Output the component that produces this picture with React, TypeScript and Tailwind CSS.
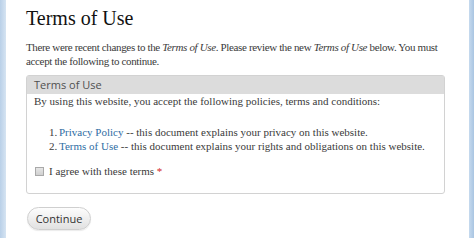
import React from "react";

export default function App() {
  const serif = { fontFamily: '"Liberation Serif", "DejaVu Serif", serif' };
  const sans = { fontFamily: '"Open Sans", "Noto Sans", sans-serif' };
  return (
    <div className="flex h-[238px] w-[474px] overflow-hidden bg-white">
      <div className="w-[6px] shrink-0 bg-gradient-to-r from-[#b9d0e8] to-[#d6e4f2]" />
      <div className="flex-1 pl-[20px] pr-[10px] text-[#3a3a3a]" style={serif}>
        <h1 className="pt-[5px] text-[20px] leading-[26px] text-[#111]">Terms of Use</h1>
        <p className="mt-[9px] whitespace-nowrap text-[11px] leading-[14px] tracking-[-0.35px] text-[#3a3a3a]">
          There were recent changes to the <em>Terms of Use</em>. Please review the new <em>Terms of Use</em> below. You must
          <br />
          accept the following to continue.
        </p>
        <div className="mt-[7px] w-[419px] rounded-[3px] border border-[#d2d2d2]">
          <div className="h-[18px] bg-[#dcdcdc] pl-[7px] text-[11px] leading-[18px] text-[#505050]" style={sans}>
            Terms of Use
          </div>
          <div className="px-[7px] pb-[15px] text-[11px] leading-[14px]">
            <p>By using this website, you accept the following policies, terms and conditions:</p>
            <ol className="mt-[17px] pl-[15px]">
              <li className="flex whitespace-nowrap">
                <span className="w-[10px]">1.</span>
                <span>
                  <a className="text-[#2f6da3]">Privacy Policy</a> -- this document explains your privacy on this website.
                </span>
              </li>
              <li className="flex whitespace-nowrap">
                <span className="w-[10px]">2.</span>
                <span>
                  <a className="text-[#2f6da3]">Terms of Use</a> -- this document explains your rights and obligations on this website.
                </span>
              </li>
            </ol>
            <label className="mt-[11px] flex h-[14px] items-center gap-[5px]">
              <span className="ml-[1px] h-[9px] w-[9px] border border-[#a9a9a9] bg-gradient-to-b from-[#e6e6e6] to-[#d0d0d0]" />
              <span>
                I agree with these terms <span className="text-[#d21f1f]">*</span>
              </span>
            </label>
          </div>
        </div>
        <button
          className="mt-[13px] ml-[1px] block h-[23px] w-[64px] rounded-full border border-[#cfcfcf] bg-gradient-to-b from-[#fdfdfd] to-[#e1e1e1] text-[11px] leading-[21px] text-[#333] shadow-[0_1px_1px_rgba(0,0,0,0.08)]"
          style={sans}
        >
          Continue
        </button>
      </div>
      <div className="w-[5px] shrink-0 bg-gradient-to-r from-[#c6daee] to-[#a9c5e2]" />
    </div>
  );
}
